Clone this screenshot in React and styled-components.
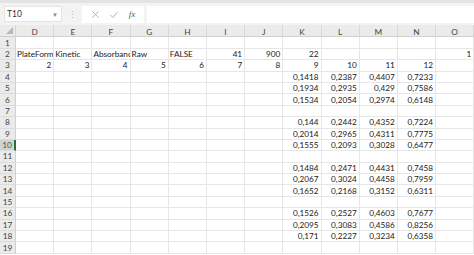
import styled, { createGlobalStyle } from "styled-components";

const GlobalStyle = createGlobalStyle`
  html, body {
    margin: 0;
    padding: 0;
    background: #ffffff;
    overflow: hidden;
  }
  body {
    font-family: Lato, "Liberation Sans", sans-serif;
  }
`;

const Sheet = styled.div`
  width: 474px;
  height: 255px;
  overflow: hidden;
  background: #ffffff;
`;

const FormulaBar = styled.div`
  height: 22px;
  border-top: 3px solid #e3e3e3;
  background: #f3f3f3;
  display: flex;
  align-items: center;
  padding-left: 4px;
`;

const NameBox = styled.div`
  width: 58px;
  height: 16px;
  background: #ffffff;
  border: 1px solid #e4e4e4;
  display: flex;
  align-items: center;
  justify-content: space-between;
  padding: 0 3px 0 2px;
  box-sizing: border-box;
  font-size: 8.5px;
  color: #333;
`;

const Caret = styled.span`
  font-size: 6px;
  color: #888;
`;

const Dots = styled.div`
  width: 20px;
  text-align: center;
  color: #b5b5b5;
  font-size: 9px;
`;

const ButtonBox = styled.div`
  width: 62px;
  height: 17px;
  background: #ffffff;
  display: flex;
  align-items: center;
  justify-content: space-around;
  padding: 0 4px;
  box-sizing: border-box;
`;

const Fx = styled.span`
  font-family: "Liberation Serif", serif;
  font-style: italic;
  font-size: 9px;
  color: #555;
`;

const FormulaInput = styled.div`
  flex: 1;
  height: 17px;
  margin-left: 3px;
  background: #ffffff;
`;

const Grid = styled.div`
  display: grid;
  grid-template-columns: 16px repeat(12, 38.2px);
  grid-template-rows: 12.4px repeat(19, 11.4px);
`;

const ColHead = styled.div`
  background: #ebebeb;
  border-right: 1px solid #d8d8d8;
  border-bottom: 1px solid #d0d0d0;
  box-sizing: border-box;
  display: flex;
  align-items: center;
  justify-content: center;
  padding-top: 2px;
  font-size: 8.3px;
  color: #444;
  position: relative;
`;

const Corner = styled(ColHead)`
  &::after {
    content: "";
    position: absolute;
    right: 2px;
    bottom: 2px;
    border-style: solid;
    border-width: 0 0 7px 7px;
    border-color: transparent transparent #b8b8b8 transparent;
  }
`;

const RowHead = styled.div`
  background: ${(p) => (p.$active ? "#d2d2d2" : "#ebebeb")};
  color: ${(p) => (p.$active ? "#1f6d43" : "#444")};
  border-right: ${(p) => (p.$active ? "2px solid #217346" : "1px solid #d0d0d0")};
  border-bottom: 1px solid #dcdcdc;
  box-sizing: border-box;
  display: flex;
  align-items: center;
  justify-content: center;
  font-size: 8.3px;
`;

const Cell = styled.div`
  border-right: 1px solid #e6e6e6;
  border-bottom: 1px solid #e6e6e6;
  box-sizing: border-box;
  display: flex;
  align-items: center;
  justify-content: ${(p) => (p.$num ? "flex-end" : "flex-start")};
  padding: 0 2px 0 1px;
  font-size: 8.2px;
  color: #1a1a1a;
  white-space: nowrap;
  overflow: hidden;
`;

const cols = ["D", "E", "F", "G", "H", "I", "J", "K", "L", "M", "N", "O"];

const block = {
  4: ["0,1418", "0,2387", "0,4407", "0,7233"],
  5: ["0,1934", "0,2935", "0,429", "0,7586"],
  6: ["0,1534", "0,2054", "0,2974", "0,6148"],
  8: ["0,144", "0,2442", "0,4352", "0,7224"],
  9: ["0,2014", "0,2965", "0,4311", "0,7775"],
  10: ["0,1555", "0,2093", "0,3028", "0,6477"],
  12: ["0,1484", "0,2471", "0,4431", "0,7458"],
  13: ["0,2067", "0,3024", "0,4458", "0,7959"],
  14: ["0,1652", "0,2168", "0,3152", "0,6311"],
  16: ["0,1526", "0,2527", "0,4603", "0,7677"],
  17: ["0,2095", "0,3083", "0,4586", "0,8256"],
  18: ["0,171", "0,2227", "0,3234", "0,6358"],
};

function rowCells(r) {
  if (r === 2) {
    return [
      ["PlateForm"], ["Kinetic"], ["Absorbance"], ["Raw"], ["FALSE"],
      ["41", true], ["900", true], ["22", true], [""], [""], [""], ["1", true],
    ];
  }
  if (r === 3) {
    return cols.map((c, i) => (i < 11 ? [String(i + 2), true] : [""]));
  }
  return cols.map((c, i) => {
    const vals = block[r];
    if (vals && i >= 7 && i <= 10) return [vals[i - 7], true];
    return [""];
  });
}

const rows = Array.from({ length: 19 }, (_, i) => i + 1);

function Row({ r }) {
  return (
    <>
      <RowHead $active={r === 10}>{r}</RowHead>
      {rowCells(r).map(([v, num], i) => (
        <Cell key={i} $num={num}>
          {v}
        </Cell>
      ))}
    </>
  );
}

export default function App() {
  return (
    <Sheet>
      <GlobalStyle />
      <FormulaBar>
        <NameBox>
          <span>T10</span>
          <Caret>▼</Caret>
        </NameBox>
        <Dots>⋮</Dots>
        <ButtonBox>
          <svg width="9" height="9" viewBox="0 0 10 10" fill="none" stroke="#a8a8a8" strokeWidth="1">
            <path d="M1.5 1.5l7 7M8.5 1.5l-7 7" />
          </svg>
          <svg width="10" height="9" viewBox="0 0 10 10" fill="none" stroke="#a8a8a8" strokeWidth="1">
            <path d="M1 5.5l2.8 2.8L9 2" />
          </svg>
          <Fx>fx</Fx>
        </ButtonBox>
        <FormulaInput />
      </FormulaBar>
      <Grid>
        <Corner />
        {cols.map((c) => (
          <ColHead key={c}>{c}</ColHead>
        ))}
        {rows.map((r) => (
          <Row key={r} r={r} />
        ))}
      </Grid>
    </Sheet>
  );
}
